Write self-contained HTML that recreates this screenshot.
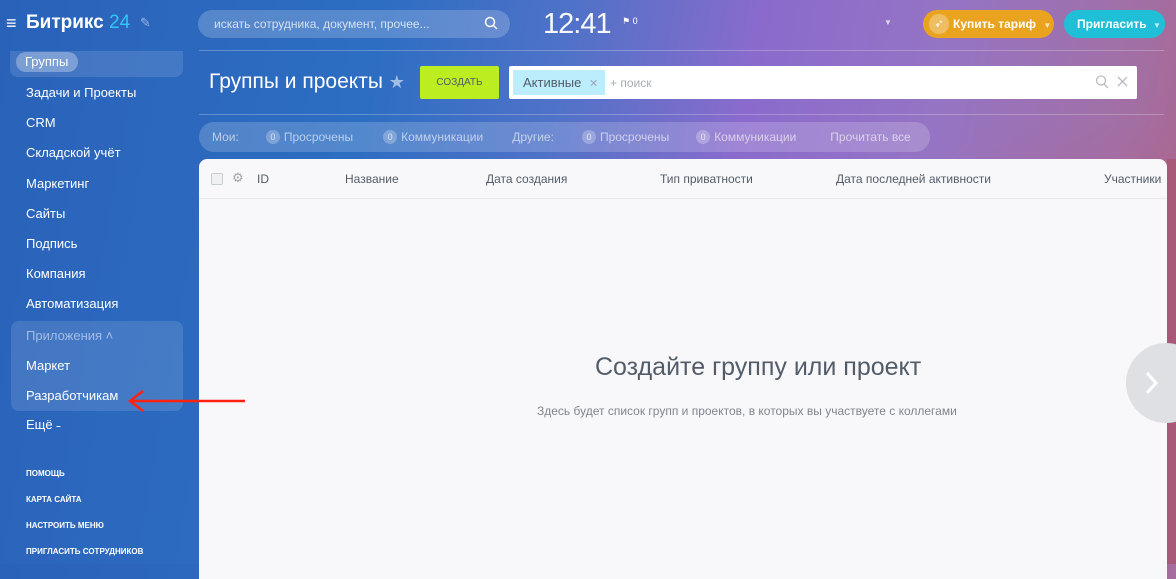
<!DOCTYPE html>
<html><head><meta charset="utf-8"><style>
*{margin:0;padding:0;box-sizing:border-box}
body{width:1176px;height:564px;overflow:hidden;font-family:"Liberation Sans","DejaVu Sans",sans-serif;position:relative;
background:linear-gradient(100deg,#2a62b9 0%,#2d6ec2 30%,#4f72c8 45%,#8a6bcc 60%,#9574c4 75%,#a26fa4 90%,#b06080 100%);}
.ov{position:absolute;inset:0;background:radial-gradient(ellipse 500px 400px at 1100px 400px,rgba(190,90,120,.6),transparent 70%);}
.abs{position:absolute}
.side a{position:absolute;left:26px;color:#fff;font-size:13px;text-decoration:none}
.small{position:absolute;left:26px;color:#fff;font-size:8px;font-weight:bold}
.hline{position:absolute;height:1px;background:rgba(255,255,255,.25)}
.cnt{display:inline-block;width:14px;height:14px;border-radius:7px;background:rgba(255,255,255,.25);color:rgba(255,255,255,.7);font-size:9px;text-align:center;line-height:14px;margin-right:4px;vertical-align:1px}
.th{position:absolute;top:172px;font-size:12px;color:#535c69}
</style></head><body>
<div class="ov"></div>
<div class="abs" style="left:6px;top:13px;color:#fff;font-size:18px">≡</div>
<div class="abs" style="left:26px;top:12px;color:#fff;font-size:19px;font-weight:bold">Битрикс <span style="color:#2fc6f6;font-weight:normal">24</span></div>
<div class="abs" style="left:140px;top:15px;color:rgba(255,255,255,.5);font-size:13px">✎</div>
<div class="abs" style="left:198px;top:10px;width:312px;height:28px;border-radius:14px;background:rgba(255,255,255,.2);color:rgba(255,255,255,.75);font-size:12px;padding:7px 16px">искать сотрудника, документ, прочее...</div>
<svg class="abs" style="left:484px;top:16px" width="14" height="14"><circle cx="6" cy="6" r="4.5" stroke="#fff" stroke-width="1.5" fill="none"/><path d="M9 9l4 4" stroke="#fff" stroke-width="1.5"/></svg>
<div class="abs" style="left:543px;top:8px;color:rgba(255,255,255,.95);font-size:29px;letter-spacing:-1px">12:41</div>
<div class="abs" style="left:622px;top:16px;color:#fff;font-size:9px">⚑ 0</div>
<div class="abs" style="left:884px;top:18px;color:rgba(255,255,255,.7);font-size:8px">▼</div>
<div class="abs" style="left:923px;top:10px;width:131px;height:28px;border-radius:14px;background:#e9a31f;color:#fff;font-size:12px;font-weight:bold;padding:7px 0 0 30px;white-space:nowrap">Купить тариф <span style="font-size:8px;opacity:.7;margin-left:4px">▼</span></div>
<div class="abs" style="left:929px;top:14px;width:20px;height:20px;border-radius:10px;background:rgba(255,255,255,.3);color:#fff;font-size:11px;text-align:center;line-height:20px">➶</div>
<div class="abs" style="left:1064px;top:10px;width:101px;height:28px;border-radius:14px;background:#1fbfd8;color:#fff;font-size:12px;font-weight:bold;padding:7px 0 0 13px;white-space:nowrap">Пригласить <span style="font-size:8px;opacity:.7;margin-left:3px">▼</span></div>
<div class="hline" style="left:199px;top:50px;width:965px"></div>
<div class="abs" style="left:10px;top:51px;width:173px;height:26px;border-radius:0 0 8px 8px;background:rgba(255,255,255,.12)"></div>
<div class="abs" style="left:16px;top:52px;width:62px;height:20px;border-radius:10px;background:rgba(255,255,255,.3);color:#fff;font-size:13px;padding:2px 0 0 9px">Группы</div>
<div class="abs" style="left:11px;top:321px;width:172px;height:90px;border-radius:8px;background:rgba(255,255,255,.12)"></div>
<div class="side">
<a style="top:85px">Задачи и Проекты</a><a style="top:115px">CRM</a><a style="top:145px">Складской учёт</a><a style="top:176px">Маркетинг</a><a style="top:206px">Сайты</a><a style="top:236px">Подпись</a><a style="top:266px">Компания</a><a style="top:296px">Автоматизация</a>
<a style="top:328px;color:rgba(255,255,255,.5)">Приложения ˄</a><a style="top:358px">Маркет</a><a style="top:388px">Разработчикам</a><a style="top:417px">Ещё ˗</a>
</div>
<div class="small" style="top:469px">ПОМОЩЬ</div><div class="small" style="top:495px">КАРТА САЙТА</div><div class="small" style="top:521px">НАСТРОИТЬ МЕНЮ</div><div class="small" style="top:547px">ПРИГЛАСИТЬ СОТРУДНИКОВ</div>
<div class="abs" style="left:209px;top:70px;color:#fff;font-size:21px">Группы и проекты <span style="color:rgba(255,255,255,.55);font-size:18px">★</span></div>
<div class="abs" style="left:420px;top:66px;width:79px;height:33px;background:#bbed21;color:#535c69;font-size:10px;text-align:center;line-height:33px;border-radius:2px">СОЗДАТЬ</div>
<div class="abs" style="left:509px;top:66px;width:628px;height:33px;background:#fff;border-radius:2px"></div>
<div class="abs" style="left:513px;top:70px;width:92px;height:25px;background:#bcedfc;color:#535c69;font-size:13px;padding:5px 0 0 10px">Активные <span style="color:#9ab;font-size:11px;margin-left:4px">✕</span></div>
<div class="abs" style="left:610px;top:76px;color:#a8adb4;font-size:12px">+ поиск</div>
<svg class="abs" style="left:1095px;top:75px" width="34" height="14"><circle cx="6" cy="5.5" r="4.5" stroke="#b8bcc2" stroke-width="1.3" fill="none"/><path d="M9 9l4 4M23 2l9 9M32 2l-9 9" stroke="#b8bcc2" stroke-width="1.3"/></svg>
<div class="hline" style="left:199px;top:114px;width:965px"></div>
<div class="abs" style="left:199px;top:122px;width:731px;height:30px;border-radius:15px;background:rgba(255,255,255,.18);color:rgba(255,255,255,.6);font-size:12px;padding:8px 0 0 13px;white-space:nowrap">Мои:<span style="margin-left:27px"><span class="cnt">0</span>Просрочены</span><span style="margin-left:30px"><span class="cnt">0</span>Коммуникации</span><span style="margin-left:29px">Другие:</span><span style="margin-left:28px"><span class="cnt">0</span>Просрочены</span><span style="margin-left:27px"><span class="cnt">0</span>Коммуникации</span><span style="margin-left:34px">Прочитать все</span></div>
<div class="abs" style="left:199px;top:159px;width:968px;height:420px;background:#f8f8fa;border-radius:8px 8px 0 0"></div>
<div class="abs" style="left:199px;top:198px;width:968px;height:1px;background:#e8eaec"></div>
<div class="abs" style="left:211px;top:173px;width:12px;height:12px;border:1px solid #c6cdd3;border-radius:2px;background:#eef0f2"></div>
<div class="abs" style="left:232px;top:170px;color:#a0a6ac;font-size:13px">⚙</div>
<div class="th" style="left:257px">ID</div><div class="th" style="left:345px">Название</div><div class="th" style="left:486px">Дата создания</div><div class="th" style="left:660px">Тип приватности</div><div class="th" style="left:836px">Дата последней активности</div><div class="th" style="left:1104px">Участники</div>
<div class="abs" style="left:595px;top:353px;color:#535c69;font-size:25px">Создайте группу или проект</div>
<div class="abs" style="left:537px;top:404px;color:#80868e;font-size:12px">Здесь будет список групп и проектов, в которых вы участвуете с коллегами</div>
<div class="abs" style="left:1167px;top:159px;width:9px;height:405px;background:#a85878"></div>
<div class="abs" style="left:1126px;top:343px;width:80px;height:80px;border-radius:40px;background:#dfe0e4"></div>
<svg class="abs" style="left:1144px;top:371px" width="14" height="24"><path d="M3 2l9 10-9 10" stroke="#fff" stroke-width="3" fill="none"/></svg>
<svg class="abs" style="left:125px;top:388px" width="122" height="28"><path d="M120 13H6M18 3L5 13l13 10" stroke="#f21" stroke-width="2.5" fill="none"/></svg>
</body></html>
